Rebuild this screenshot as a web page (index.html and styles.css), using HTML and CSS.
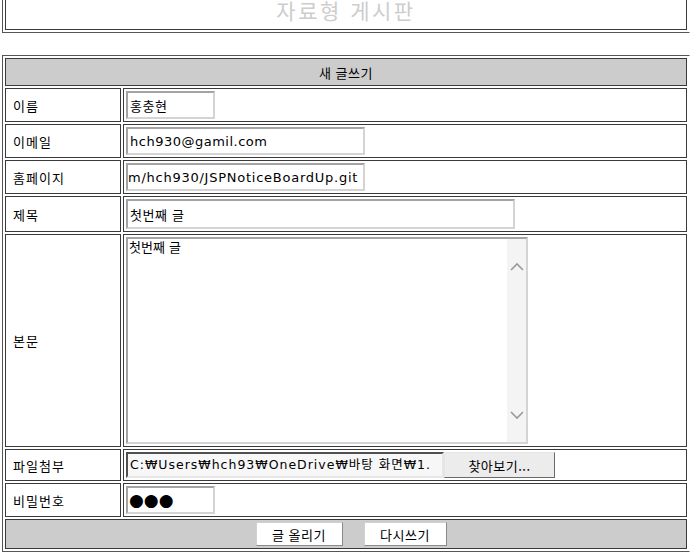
FILE: index.html
```html
<!DOCTYPE html>
<html lang="ko">
<head>
<meta charset="utf-8">
<title>자료형 게시판</title>
<link rel="stylesheet" href="styles.css">
</head>
<body>
<table class="frame title-table">
  <tr><td class="title">자료형 게시판</td></tr>
</table>
<form class="write-form" onsubmit="return false">
<table class="frame form-table">
  <tr><td colspan="2" class="head">새 글쓰기</td></tr>
  <tr>
    <td class="label">이름</td>
    <td class="field"><input class="in in-name" type="text" value="홍충현"></td>
  </tr>
  <tr>
    <td class="label">이메일</td>
    <td class="field"><input class="in in-mail" type="text" value="hch930@gamil.com"></td>
  </tr>
  <tr>
    <td class="label">홈페이지</td>
    <td class="field"><input class="in in-home" type="text" value="m/hch930/JSPNoticeBoardUp.git"></td>
  </tr>
  <tr>
    <td class="label">제목</td>
    <td class="field"><input class="in in-subject" type="text" value="첫번째 글"></td>
  </tr>
  <tr>
    <td class="label">본문</td>
    <td class="field">
      <div class="area">
        <textarea class="area-text">첫번째 글</textarea>
        <div class="area-bar">
          <svg class="chev" width="14" height="9" viewBox="0 0 14 9"><path d="M1 8 L7 2 L13 8" fill="none" stroke="#9a9a9a" stroke-width="1.6"/></svg>
          <svg class="chev" width="14" height="9" viewBox="0 0 14 9"><path d="M1 1 L7 7 L13 1" fill="none" stroke="#9a9a9a" stroke-width="1.6"/></svg>
        </div>
      </div>
    </td>
  </tr>
  <tr>
    <td class="label">파일첨부</td>
    <td class="field">
      <div class="file">
        <span class="file-path">C:₩Users₩hch93₩OneDrive₩바탕 화면₩1.</span>
        <button type="button" class="file-btn">찾아보기...</button>
      </div>
    </td>
  </tr>
  <tr>
    <td class="label">비밀번호</td>
    <td class="field"><input class="in in-pass" type="text" value="●●●"></td>
  </tr>
  <tr>
    <td colspan="2" class="foot">
      <div class="actions">
        <button type="submit" class="btn btn-post">글 올리기</button>
        <button type="reset" class="btn btn-reset">다시쓰기</button>
      </div>
    </td>
  </tr>
</table>
</form>
</body>
</html>
```
FILE: styles.css
```css
html, body {
  margin: 0;
  padding: 0;
  background: #ffffff;
}

body {
  font-family: "DejaVu Sans", "Noto Sans CJK KR", sans-serif;
  font-size: 13px;
  color: #000;
}

.frame {
  border: 1px solid #555555;
  border-right-color: transparent;
  border-spacing: 2px;
  width: 688px;
  margin-left: 2px;
}

.frame td {
  border: 1px solid #3a3a3a;
  padding: 2px;
}

.title-table {
  margin-top: -6px;
  margin-bottom: 22px;
}

.title-table .title {
  text-align: center;
  font-family: "Noto Sans CJK KR", sans-serif;
  font-size: 21px;
  letter-spacing: 2.5px;
  line-height: 24px;
  color: #cdcdcd;
  padding: 0 0 7px;
}

.write-form {
  margin: 0;
}

.form-table .head {
  background: #cccccc;
  text-align: center;
  height: 24px;
  padding: 1px 0 1px;
  font-family: "Noto Sans CJK KR", sans-serif;
  letter-spacing: 0.5px;
}

.form-table .label {
  width: 116px;
  box-sizing: border-box;
  padding: 0 0 0 7px;
  vertical-align: middle;
  font-family: "Noto Sans CJK KR", sans-serif;
  letter-spacing: 1px;
}

.form-table .field {
  padding: 2px 2px;
  vertical-align: middle;
}

.in {
  box-sizing: border-box;
  border: 2px solid;
  border-color: #a3a3a3 #d4d4d4 #d4d4d4 #a3a3a3;
  padding: 0 2px;
  margin: 0;
  font-family: "DejaVu Sans", "Noto Sans CJK KR", sans-serif;
  font-size: 13px;
  letter-spacing: 0.5px;
  color: #000;
  background: #fff;
  outline: none;
  display: block;
}

.in-name { width: 89px; height: 28px; }
.in-mail { width: 239px; height: 28px; }
.in-home {
  width: 239px;
  height: 28px;
  padding-left: 0;
  letter-spacing: 0.75px;
}
.in-subject { width: 389px; height: 30px; }
.in-pass {
  width: 89px;
  height: 28px;
  font-size: 17px;
  letter-spacing: 0;
  padding-left: 1px;
}

.area {
  display: flex;
  width: 402px;
  height: 207px;
  box-sizing: border-box;
  border: 2px solid;
  border-color: #a3a3a3 #d4d4d4 #d4d4d4 #a3a3a3;
  background: #fff;
}

.area-text {
  flex: 1;
  border: 0;
  margin: 0;
  padding: 1px 1px;
  resize: none;
  outline: none;
  overflow: hidden;
  font-family: "DejaVu Sans", "Noto Sans CJK KR", sans-serif;
  font-size: 13px;
  line-height: 16px;
  color: #000;
}

.area-bar {
  width: 19px;
  background: #f4f4f4;
  display: flex;
  flex-direction: column;
  justify-content: space-between;
  align-items: center;
  padding: 23px 0 22px;
}

.chev { display: block; }

.file {
  display: flex;
  width: 429px;
  height: 26px;
}

.file-path {
  width: 318px;
  box-sizing: border-box;
  border: 2px solid;
  border-color: #505050 #e6e6e6 #e6e6e6 #505050;
  background: #f7f7f7;
  padding: 0 2px;
  line-height: 22px;
  font-family: "DejaVu Sans", "Noto Sans CJK KR", sans-serif;
  font-size: 12.5px;
  letter-spacing: 1px;
  white-space: nowrap;
  overflow: hidden;
}

.file-btn {
  flex: 1;
  margin: 0;
  box-sizing: border-box;
  border: 1px solid;
  border-color: #e6e6e6 #6a6a6a #6a6a6a #e6e6e6;
  background: #ececec;
  font-family: "Noto Sans CJK KR", sans-serif;
  font-size: 13px;
  letter-spacing: 0.5px;
  color: #000;
  padding: 0;
}

.form-table .foot {
  background: #cccccc;
  padding: 2px 0;
}

.actions {
  display: flex;
  justify-content: center;
  gap: 21px;
  padding-left: 10px;
}

.btn {
  box-sizing: border-box;
  height: 24px;
  margin: 0;
  background: #ffffff;
  border: 1px solid;
  border-color: #d0d0d0 #8a8a8a #8a8a8a #d0d0d0;
  font-family: "Noto Sans CJK KR", sans-serif;
  font-size: 13px;
  letter-spacing: 0.5px;
  color: #000;
  padding: 0;
}

.btn-post { width: 87px; }
.btn-reset { width: 83px; }
```
